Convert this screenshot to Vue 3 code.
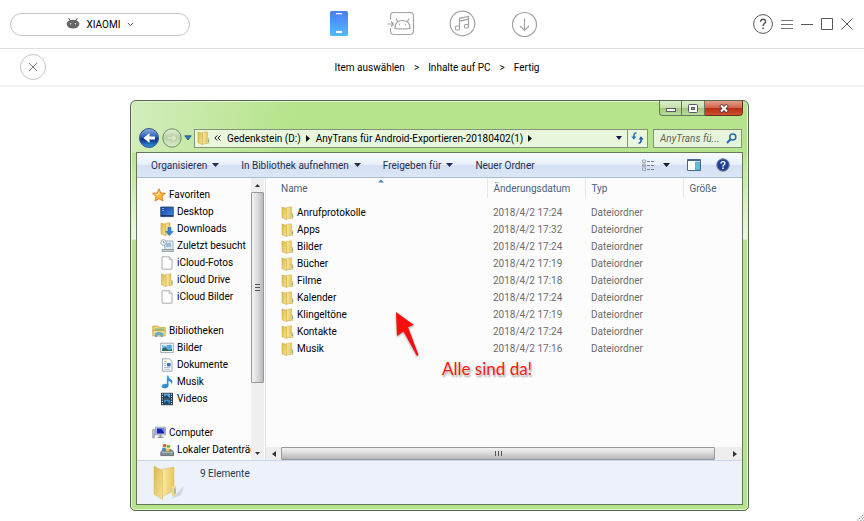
<script setup>
import { ref } from 'vue'

const navItems = [
  { id: 'device', label: 'Gerät', active: true },
  { id: 'import', label: 'Auf Android übertragen' },
  { id: 'media', label: 'Medien' },
  { id: 'download', label: 'Herunterladen' }
]
const steps = ['Item auswählen', 'Inhalte auf PC', 'Fertig']
const path = ['Gedenkstein (D:)', 'AnyTrans für Android-Exportieren-20180402(1)']
const commands = [
  { label: 'Organisieren', menu: true },
  { label: 'In Bibliothek aufnehmen', menu: true },
  { label: 'Freigeben für', menu: true },
  { label: 'Neuer Ordner', menu: false }
]
const groups = [
  {
    name: 'Favoriten',
    icon: 'star',
    items: [
      { name: 'Desktop', icon: 'desktop' },
      { name: 'Downloads', icon: 'downloads' },
      { name: 'Zuletzt besucht', icon: 'recent' },
      { name: 'iCloud-Fotos', icon: 'page' },
      { name: 'iCloud Drive', icon: 'folder' },
      { name: 'iCloud Bilder', icon: 'page' }
    ]
  },
  {
    name: 'Bibliotheken',
    icon: 'library',
    items: [
      { name: 'Bilder', icon: 'picture' },
      { name: 'Dokumente', icon: 'document' },
      { name: 'Musik', icon: 'note' },
      { name: 'Videos', icon: 'film' }
    ]
  },
  {
    name: 'Computer',
    icon: 'computer',
    items: [{ name: 'Lokaler Datenträg', icon: 'drive' }]
  }
]
const files = [
  ['Anrufprotokolle', '17:24'],
  ['Apps', '17:32'],
  ['Bilder', '17:24'],
  ['Bücher', '17:19'],
  ['Filme', '17:18'],
  ['Kalender', '17:24'],
  ['Klingeltöne', '17:19'],
  ['Kontakte', '17:24'],
  ['Musik', '17:16']
].map(([name, time]) => ({ name, date: `2018/4/2 ${time}`, type: 'Dateiordner' }))
const query = ref('')
</script>

<template>
  <div class="page">
    <svg class="sprite" width="0" height="0" aria-hidden="true">
      <defs>
        <linearGradient id="g-phone" x1="0" y1="0" x2="0" y2="1">
          <stop offset="0" stop-color="#4a7df5" /><stop offset="1" stop-color="#52b9fa" />
        </linearGradient>
        <linearGradient id="g-fold" x1="0" y1="0" x2="1" y2="0">
          <stop offset="0" stop-color="#fbeeae" /><stop offset="1" stop-color="#e8c65c" />
        </linearGradient>
        <linearGradient id="g-fold2" x1="0" y1="0" x2="1" y2="1">
          <stop offset="0" stop-color="#dcb94c" /><stop offset="1" stop-color="#f8e392" />
        </linearGradient>
        <linearGradient id="g-back" x1="0" y1="0" x2="0" y2="1">
          <stop offset="0" stop-color="#8fb0e0" /><stop offset=".45" stop-color="#2c5bb4" />
          <stop offset=".55" stop-color="#0a2f86" /><stop offset="1" stop-color="#2f9be8" />
        </linearGradient>
        <linearGradient id="g-fwd" x1="0" y1="0" x2="0" y2="1">
          <stop offset="0" stop-color="#e4eedb" /><stop offset=".5" stop-color="#b9d3a6" />
          <stop offset="1" stop-color="#dcefcd" />
        </linearGradient>
        <linearGradient id="g-screen" x1="0" y1="0" x2="1" y2="1">
          <stop offset="0" stop-color="#123f9c" /><stop offset="1" stop-color="#3f8ee8" />
        </linearGradient>
        <linearGradient id="g-note" x1="0" y1="0" x2="1" y2="1">
          <stop offset="0" stop-color="#5cc0f5" /><stop offset="1" stop-color="#1668b8" />
        </linearGradient>
      </defs>
      <symbol id="i-folder" viewBox="0 0 13 14">
        <path d="M5 1.500 10.500.8v11.400l-5.500 1z" fill="url(#g-fold)" stroke="#d3b04f" stroke-width=".5" />
        <path d="M1 1 5.600 2.600v11L1 11.800z" fill="url(#g-fold2)" stroke="#c6a03c" stroke-width=".5" />
        <path d="M9 7.500h3v5H9z" fill="#ecd88a" stroke="#cbb05c" stroke-width=".4" /><path d="M11.300 8.500v2.600" stroke="#4fa7a0" stroke-width=".9" />
      </symbol>
      <symbol id="i-star" viewBox="0 0 14 14">
        <path d="m7 .8 1.800 4.100 4.600.4L10 8.400l1 4.700-4-2.500-4 2.500 1-4.700L.6 5.300l4.600-.4z" fill="#fbb53a" stroke="#dd7a1c" stroke-width=".9" />
        <path d="m7 3 1.100 2.800L5 8 2.800 6l3-.3z" fill="#ffe28a" />
      </symbol>
      <symbol id="i-desktop" viewBox="0 0 14 14">
        <path d="M.7 2h12.600v9.600H.7z" fill="url(#g-screen)" stroke="#27406e" stroke-width=".8" />
        <path d="M2 3.500h2M2 5.500h2" stroke="#9cc9ff" stroke-width=".8" /><path d="M1 10.700h12" stroke="#1a2a4a" stroke-width="1" />
      </symbol>
      <symbol id="i-downloads" viewBox="0 0 14 14">
        <path d="M5 1.500 10 .8v11.400l-5 1z" fill="url(#g-fold)" stroke="#c9a445" stroke-width=".6" />
        <path d="M1 1 5.600 2.600v11L1 11.800z" fill="url(#g-fold2)" stroke="#c6a03c" stroke-width=".6" />
        <path d="M8 5.500h3v4h2.200l-3.700 4-3.700-4H8z" fill="#2f88d8" stroke="#165a9e" stroke-width=".5" />
      </symbol>
      <symbol id="i-recent" viewBox="0 0 14 14">
        <path d="M4 2h9v8.500H5z" fill="#dfe8ee" stroke="#8797a3" stroke-width=".7" />
        <path d="M6 5h5M6 7h5" stroke="#4f93c9" stroke-width="1" /><path d="M2 10.500h11.500v2H2z" fill="#bcc8d0" stroke="#7e8b94" stroke-width=".6" />
        <circle cx="3.500" cy="3.500" r="2.800" fill="#f3f6f8" stroke="#8a98a3" stroke-width=".8" /><path d="M3.500 2v1.700h1.400" fill="none" stroke="#55636e" stroke-width=".6" />
      </symbol>
      <symbol id="i-page" viewBox="0 0 14 14">
        <path d="M2 .8h7.500L12 3.400v9.800H2z" fill="#fdfdfd" stroke="#999" stroke-width=".8" /><path d="M9.300.9v2.700h2.600" fill="#e3e3e3" stroke="#999" stroke-width=".6" />
      </symbol>
      <symbol id="i-library" viewBox="0 0 14 14">
        <path d="M.8 2h5l1 1.400h6.400v4H.8z" fill="#f1d272" stroke="#c39e3a" stroke-width=".7" />
        <path d="M3 4.500h9v3H3z" fill="#7fc489" /><path d="M.8 6.400h12.400V12H.8z" fill="#f4db86" stroke="#c39e3a" stroke-width=".7" />
        <path d="M3.200 12.600V9.500q3.800-2.600 7.600 0v3.100H9V10.700H5v1.900z" fill="#64b4e4" stroke="#3b8fc4" stroke-width=".5" />
      </symbol>
      <symbol id="i-picture" viewBox="0 0 14 14">
        <path d="M.7 2.200h12.600v9.400H.7z" fill="#fff" stroke="#8a949c" stroke-width=".8" /><path d="M2.200 3.800h9.600v6.300H2.200z" fill="#56a8e2" />
        <path d="M2.200 8q3-3 5 0t4.600-.4v2.500H2.200z" fill="#2a6b58" /><path d="M3 5q2-1 4 0" stroke="#e3f4ff" stroke-width="1" fill="none" />
      </symbol>
      <symbol id="i-document" viewBox="0 0 14 14">
        <path d="M2.500.8h6.800L12 3.400v9.800H2.500z" fill="#fafcff" stroke="#8d98a5" stroke-width=".8" />
        <path d="M4 3.500h3M4 5.500h2M4 7.500h2M4 9.500h6M4 11.300h6" stroke="#8fa7c4" stroke-width=".7" /><path d="M7 5h3.600v3.400H7z" fill="#3272c4" />
      </symbol>
      <symbol id="i-note" viewBox="0 0 14 14">
        <path d="M6.800.6h1.500q.3 2.300 2.600 3.700 2.600 2 .6 5.200.3-2.600-3-3.400v4.700q-.3 2.400-3.700 2.600-3.400-.2-3.300-2.300.3-2.200 3.200-2.400 1.300 0 2.100.4z" fill="url(#g-note)" />
      </symbol>
      <symbol id="i-film" viewBox="0 0 14 14">
        <path d="M1 .8h12v12.400H1z" fill="#2b3238" /><path d="M3.800 1.500h6.400v5H3.800z" fill="#5aaae0" /><path d="M3.800 7.500h6.400v5H3.800z" fill="#3b86c4" />
        <path d="M3.800 4.500 7 3l3.200 3.500H3.800zM3.800 11l3-2 3.400 3.500H3.800z" fill="#1f4363" />
        <path d="M2.400 1.500v11.500M11.600 1.500v11.500" stroke="#dfe5ea" stroke-width="1.100" stroke-dasharray="1.200 1.200" />
      </symbol>
      <symbol id="i-computer" viewBox="0 0 14 14">
        <path d="M.6 3.500h2v8.500h-2z" fill="#b5bcc2" stroke="#7e878e" stroke-width=".5" /><path d="M3.500 1.200h10v7.600h-10z" fill="#dfe3e8" stroke="#808a94" stroke-width=".7" />
        <path d="M4.700 2.400h7.600v5.200H4.700z" fill="#1626b4" /><path d="M9 2.400h3.300v4z" fill="#6d86ec" /><path d="M7.500 9h2v1.800h2V12H5.500v-1.200h2z" fill="#8f989f" />
      </symbol>
      <symbol id="i-drive" viewBox="0 0 14 14">
        <path d="M.8 9 3 6.800h8.500L13.500 9v3.600H.8z" fill="#7f8b94" stroke="#46525a" stroke-width=".7" /><path d="M1.500 9.300h11.500" stroke="#cfd7dc" stroke-width=".7" />
        <path d="M10.300 10.800h2" stroke="#59d36a" stroke-width="1.200" />
        <path d="M3 1.500q1.800-1 3.400 0L5.900 4.300q-1.600-.9-3.300 0z" fill="#e8502c" /><path d="M7 1.700q1.600.9 3.300 0L9.800 4.600q-1.700.8-3.300 0z" fill="#6cb33e" />
        <path d="M2.500 4.900q1.700-.9 3.300 0l-.5 2.700q-1.600-.9-3.300 0z" fill="#3a87d6" /><path d="M6.400 5.200q1.600.9 3.300 0l-.5 2.700q-1.700.9-3.300 0z" fill="#f6c02c" />
      </symbol>
    </svg>

    <header class="topbar">
      <button class="device" type="button">
        <svg width="14" height="14" viewBox="0 0 14 14" aria-hidden="true">
          <path d="m2.500 1 1.600 2.400M11.500 1 9.900 3.400" stroke="#666" stroke-width="1" />
          <path d="M3.500 3.200q3.500-1 7 0 2.500 1 3 3.600-.5 3-2.500 4-4 1.200-8 0-2-1-2.500-4 .5-2.600 3-3.600z" fill="#666" />
          <circle cx="4.600" cy="6.800" r=".7" fill="#eee" /><circle cx="9.400" cy="6.800" r=".7" fill="#eee" />
        </svg>
        <span>XIAOMI</span>
        <svg width="7" height="5" viewBox="0 0 7 5" aria-hidden="true"><path d="m.7.8 2.800 2.800L6.300.8" fill="none" stroke="#555" /></svg>
      </button>

      <nav class="modes" aria-label="Bereiche">
        <button v-for="n in navItems" :key="n.id" type="button" :aria-label="n.label" :aria-pressed="!!n.active">
          <svg v-if="n.id === 'device'" width="28" height="28" viewBox="0 0 28 28">
            <rect x="5" y="1" width="18" height="25" rx="1.500" fill="url(#g-phone)" />
            <path d="M11 3.700h6" stroke="#fff" stroke-width="1.200" /><path d="M11 22h6" stroke="#fff" stroke-width="2.200" />
          </svg>
          <svg v-else-if="n.id === 'import'" width="28" height="28" viewBox="0 0 28 28" fill="none" stroke="#a3a3a3" stroke-width="1.200">
            <path d="M3.500 9.500V6q0-3.500 3.500-3.500h16q3.500 0 3.500 3.500v15q0 3.500-3.500 3.500H7q-3.500 0-3.500-3.500v-3" />
            <path d="M.5 14h5.500M4 11.500 6.500 14 4 16.500M8 18.500q0-8 7.500-8t7.500 8q-7.500 1-15 0zM10.500 11.500 9 8.500M20.500 11.500l1.500-3" />
            <path d="M12 14.500h.9M18 14.500h.9" stroke-width="1.500" />
          </svg>
          <svg v-else-if="n.id === 'media'" width="28" height="28" viewBox="0 0 28 28" fill="none" stroke="#a3a3a3" stroke-width="1.200">
            <circle cx="13.500" cy="13.500" r="12.300" /><path d="M10.500 17.500V8.300L19.500 6.500V16M10.500 11.200l9-2" />
            <rect x="6.500" y="16" width="4" height="4" rx="1" /><rect x="15.500" y="14.500" width="4" height="3.500" rx="1" />
          </svg>
          <svg v-else width="28" height="28" viewBox="0 0 28 28" fill="none" stroke="#a3a3a3" stroke-width="1.200">
            <circle cx="13.500" cy="14.500" r="12" /><path d="M13.500 8.500v12M9 16l4.500 4.500L18 16" />
          </svg>
        </button>
      </nav>

      <div class="window-tools">
        <button type="button" aria-label="Hilfe">
          <svg width="20" height="20" viewBox="0 0 20 20" fill="none" stroke="#555"><circle cx="10" cy="10" r="9.400" /><path d="M7.500 7.800q.2-2.500 2.600-2.500t2.500 2.200q0 1.200-1.300 2.100T10.100 12" stroke-width="1.400" /><path d="M9.300 14.200h1.600" stroke-width="1.600" /></svg>
        </button>
        <button type="button" aria-label="Menü"><svg width="12" height="12" viewBox="0 0 12 12" stroke="#777"><path d="M0 2.500h12M0 6.500h12M0 10.500h12" /></svg></button>
        <button type="button" aria-label="Minimieren"><svg width="12" height="12" viewBox="0 0 12 12" stroke="#555"><path d="M0 6.500h12" /></svg></button>
        <button type="button" aria-label="Maximieren"><svg width="12" height="12" viewBox="0 0 12 12" fill="none" stroke="#555"><path d="M.5.500h11v11H.5z" /></svg></button>
        <button type="button" aria-label="Schließen"><svg width="12" height="12" viewBox="0 0 12 12" stroke="#555"><path d="m.5.500 11 11M11.500.500l-11 11" /></svg></button>
      </div>
    </header>

    <div class="stepbar">
      <button class="cancel" type="button" aria-label="Abbrechen">
        <svg width="10" height="10" viewBox="0 0 10 10" stroke="#777"><path d="m1 1 8 8M9 1 1 9" /></svg>
      </button>
      <ol class="steps">
        <template v-for="(s, i) in steps" :key="s">
          <li v-if="i" aria-hidden="true">&gt;</li>
          <li>{{ s }}</li>
        </template>
      </ol>
    </div>

    <main class="stage">
      <section class="explorer">
        <div class="caption">
          <button type="button" aria-label="Fenster minimieren"><svg width="12" height="9" viewBox="0 0 12 9"><rect x="1.500" y="4.500" width="9" height="3" fill="#fff" stroke="#555a66" /></svg></button>
          <button type="button" aria-label="Fenster maximieren"><svg width="12" height="9" viewBox="0 0 12 9"><rect x="1.500" y=".5" width="9" height="8" rx="1" fill="#fff" stroke="#555a66" /><rect x="4.500" y="3.500" width="3" height="2" fill="#9bb87c" stroke="#555a66" /></svg></button>
          <button type="button" class="close" aria-label="Fenster schließen"><svg width="12" height="9" viewBox="0 0 12 9"><path d="m2.500 1 7 7M9.500 1l-7 7" stroke="#5b3434" stroke-width="3.600" /><path d="m3 1.500 6 6M9 1.500l-6 6" stroke="#fff" stroke-width="2" /></svg></button>
        </div>

        <div class="location">
          <div class="travel">
            <button type="button" aria-label="Zurück">
              <svg width="22" height="20" viewBox="0 0 22 20"><circle cx="11" cy="10" r="9.500" fill="url(#g-back)" stroke="#375487" /><path d="M17 8.500h-5.500V5L5.500 10l6 5v-3.500H17z" fill="#fff" /></svg>
            </button>
            <button type="button" aria-label="Vorwärts">
              <svg width="22" height="20" viewBox="0 0 22 20"><circle cx="12" cy="10" r="9.200" fill="url(#g-fwd)" stroke="#6f8a60" /><path d="M7 8.800h5V5.500l5 4.500-5 4.500v-3.300H7z" fill="#d9e9cd" stroke="#a9c497" stroke-width=".6" /></svg>
            </button>
            <button type="button" aria-label="Verlauf" class="history">
              <svg width="8" height="6" viewBox="0 0 8 6"><path d="M.8.800h6.400L4 5z" fill="#3578b8" stroke="#1d4f7c" stroke-width=".8" /></svg>
            </button>
          </div>
          <div class="address">
            <svg width="13" height="14" aria-hidden="true"><use href="#i-folder" /></svg>
            <svg class="chevrons" width="7" height="6" viewBox="0 0 7 6"><path d="M3.300.5.800 3l2.500 2.500M6.500.5 4 3l2.500 2.500" fill="none" stroke="#111" /></svg>
            <template v-for="p in path" :key="p">
              <a href="#">{{ p }}</a>
              <svg class="crumb" width="4" height="7" viewBox="0 0 4 7"><path d="m0 0 4 3.500L0 7z" fill="#111" /></svg>
            </template>
            <button type="button" class="drop" aria-label="Vorherige Orte"><svg width="6" height="4" viewBox="0 0 6 4"><path d="M0 0h6L3 4z" fill="#1c1448" /></svg></button>
            <button type="button" class="refresh" aria-label="Aktualisieren">
              <svg width="13" height="12" viewBox="0 0 13 12"><path d="M5.500.800Q2.500 1 3 5" fill="none" stroke="#2d71c6" stroke-width="1.600" /><path d="M.3 4.500h5L2.900 7.800z" fill="#2d71c6" /><path d="M7.500 11.200q3-.2 2.500-4.200" fill="none" stroke="#2458a8" stroke-width="1.600" /><path d="M7.600 7.500h5L10 4.200z" fill="#2458a8" /></svg>
            </button>
          </div>
          <label class="search">
            <input v-model="query" type="text" placeholder="AnyTrans fü..." aria-label="Durchsuchen" />
            <svg width="11" height="11" viewBox="0 0 11 11" fill="none" stroke="#2a66b0"><circle cx="6.800" cy="4" r="3" stroke-width="1.500" /><path d="M4.500 6.300 1 10" stroke-width="2" /></svg>
          </label>
        </div>

        <div class="client">
          <div class="commands">
            <button v-for="c in commands" :key="c.label" type="button">
              {{ c.label }}
              <svg v-if="c.menu" width="7" height="4" viewBox="0 0 7 4" aria-hidden="true"><path d="M0 0h7L3.500 4z" fill="#1e2e52" /></svg>
            </button>
            <div class="views">
              <button type="button" aria-label="Ansicht ändern">
                <svg width="13" height="12" viewBox="0 0 13 12"><path d="M.5 1h3v2.500h-3zM.5 5h3v2.500h-3zM.5 9h3v2.500h-3z" fill="#e9edf4" stroke="#7f8da6" stroke-width=".7" /><path d="M1.500 6.200h1.200" stroke="#d0532f" /><path d="M5 2.500h8M5 6.500h8M5 10.500h8" stroke="#75839c" stroke-dasharray="3 1" /></svg>
              </button>
              <button type="button" aria-label="Weitere Optionen" class="more"><svg width="7" height="4" viewBox="0 0 7 4"><path d="M0 0h7L3.500 4z" fill="#111a2c" /></svg></button>
              <button type="button" aria-label="Vorschaufenster" class="pane">
                <svg width="14" height="12" viewBox="0 0 14 12"><path d="M.5.500h13v11H.5z" fill="#fff" stroke="#44698f" /><path d="M0 1.500h14" stroke="#44698f" /><path d="M8.500 3h4v8h-4z" fill="#5fc0dc" stroke="#3a8fb0" stroke-width=".6" /></svg>
              </button>
              <button type="button" aria-label="Hilfe anzeigen">
                <svg width="14" height="14" viewBox="0 0 14 14"><circle cx="7" cy="7" r="6.200" fill="#1f3f9e" stroke="#6d7a94" /><path d="M5 5.600Q5.100 3.600 7 3.600t1.900 1.700Q8.900 6.300 7.800 7T7 8.600" fill="none" stroke="#fff" stroke-width="1.400" /><path d="M6.200 10.300h1.600" stroke="#fff" stroke-width="1.400" /></svg>
              </button>
            </div>
          </div>

          <div class="panes">
            <nav class="tree" aria-label="Navigationsbereich">
              <ul>
                <li v-for="g in groups" :key="g.name">
                  <a href="#" class="root"><svg width="14" height="14" aria-hidden="true"><use :href="`#i-${g.icon}`" /></svg>{{ g.name }}</a>
                  <a v-for="it in g.items" :key="it.name" href="#" class="leaf"><svg width="14" height="14" aria-hidden="true"><use :href="`#i-${it.icon}`" /></svg>{{ it.name }}</a>
                </li>
              </ul>
            </nav>
            <div class="vscroll" aria-hidden="true">
              <span class="arrow"><svg width="5" height="3" viewBox="0 0 5 3"><path d="M0 3h5L2.500 0z" fill="#333" /></svg></span>
              <span class="thumb"><svg width="5" height="7" viewBox="0 0 5 7"><path d="M0 .5h5M0 3.500h5M0 6.500h5" stroke="#555" /></svg></span>
              <span class="arrow end"><svg width="5" height="3" viewBox="0 0 5 3"><path d="M0 0h5L2.500 3z" fill="#333" /></svg></span>
            </div>
            <div class="content">
              <svg class="sorted" width="6" height="4" viewBox="0 0 6 4" aria-hidden="true"><path d="M0 3.500 3 .5l3 3z" fill="#4f86ae" /></svg>
              <table>
                <thead>
                  <tr><th>Name</th><th class="date">Änderungsdatum</th><th class="type">Typ</th><th class="size">Größe</th></tr>
                </thead>
                <tbody>
                  <tr v-for="f in files" :key="f.name">
                    <td><span class="file"><svg width="13" height="14" aria-hidden="true"><use href="#i-folder" /></svg>{{ f.name }}</span></td>
                    <td>{{ f.date }}</td>
                    <td>{{ f.type }}</td>
                    <td></td>
                  </tr>
                </tbody>
              </table>
              <div class="note">
                <svg width="28" height="48" viewBox="0 0 28 48" aria-hidden="true"><path d="m2 1 18 13-6 2 10.500 28-1.500 1L9.500 20.500 3 25z" fill="#fb0d0d" /></svg>
                <span>Alle sind da!</span>
              </div>
              <div class="hscroll" aria-hidden="true">
                <span class="side"><svg width="4" height="6" viewBox="0 0 4 6"><path d="M4 0v6L0 3z" fill="#333" /></svg></span>
                <span class="bar"><svg width="7" height="5" viewBox="0 0 7 5"><path d="M.5 0v5M3.500 0v5M6.500 0v5" stroke="#555" /></svg></span>
                <span class="side"><svg width="4" height="6" viewBox="0 0 4 6"><path d="M0 0v6l4-3z" fill="#333" /></svg></span>
              </div>
            </div>
          </div>

          <footer class="status">
            <svg width="32" height="36" viewBox="0 0 32 36" aria-hidden="true">
              <path d="m22 30 9-9-3 9-10 4z" fill="#a9afbc" opacity=".4" />
              <path d="M8 4.500 21 2v24L8 32z" fill="url(#g-fold)" stroke="#d9bc62" stroke-width=".5" />
              <path d="m1 1 8.500 5v28.500L1 29z" fill="url(#g-fold2)" stroke="#d3b355" stroke-width=".5" />
              <path d="M19 21h4v9l-4 1.500z" fill="#eed98c" /><path d="M22 23.500v5" stroke="#65b6b0" stroke-width="1.200" />
            </svg>
            <span>9 Elemente</span>
          </footer>
        </div>
      </section>
    </main>

    <svg class="grip" width="9" height="8" viewBox="0 0 9 8" aria-hidden="true">
      <path d="m1 9 8.500-8.500M4 9.500 9.500 4M7 9.500 9.500 7" stroke="#888" stroke-width="1.200" stroke-dasharray="1.200 1" />
    </svg>
  </div>
</template>

<style>
body {
  background: #fff;
}
</style>

<style scoped>
.page {
  position: relative;
  box-sizing: border-box;
  min-height: 100vh;
  padding-bottom: 10px;
  background: #fff;
  color: #000;
  font: 10px/17px Roboto, "Open Sans", sans-serif;
}
.page *,
.page *::before {
  box-sizing: border-box;
}
.sprite {
  position: absolute;
}
svg {
  display: block;
  flex: none;
}
button {
  display: flex;
  align-items: center;
  justify-content: center;
  margin: 0;
  padding: 0;
  border: 0;
  background: none;
  color: inherit;
  font: inherit;
  white-space: nowrap;
}
a {
  color: inherit;
  text-decoration: none;
  white-space: nowrap;
}
ul,
ol {
  margin: 0;
  padding: 0;
  list-style: none;
}

.topbar {
  display: grid;
  grid-template-columns: 1fr auto 1fr;
  align-items: center;
  height: 49px;
  padding: 0 11px 0 10px;
  border-bottom: 1px solid #dedede;
}
.device {
  gap: 7px;
  width: 180px;
  height: 23px;
  border: 1px solid #c4c4c4;
  border-radius: 12px;
}
.modes {
  display: flex;
  gap: 34px;
}
.window-tools {
  display: flex;
  justify-content: flex-end;
  align-items: center;
  gap: 8px;
}
.stepbar {
  display: grid;
  grid-template-columns: 1fr auto 1fr;
  align-items: center;
  height: 38px;
  padding: 0 10px 0 20px;
  border-bottom: 2px solid #f1f1f1;
}
.cancel {
  width: 26px;
  height: 26px;
  border: 1px solid #c4c4c4;
  border-radius: 50%;
}
.steps {
  display: flex;
  gap: 9px;
}

.stage {
  padding: 13px 115px 0 130px;
}
.explorer {
  padding: 0 5px 5px;
  border: 1px solid #59664f;
  border-radius: 6px 6px 5px 5px;
  background:
    linear-gradient(100deg, #d3edbc 0, rgba(182, 228, 140, 0) 160px) 0 0 / 100% 52px no-repeat,
    linear-gradient(#b6e48c 0, #b6e48c 50px, #eef8e6 138px, #b6e48c 139px);
  box-shadow: inset 0 0 0 1px #e2f5d2;
}
.caption {
  display: flex;
  justify-content: flex-end;
  height: 15px;
}
.caption button {
  width: 23px;
  border: 1px solid #66785a;
  border-top: 0;
  border-left: 0;
  background: linear-gradient(#dcefcb, #c3dfa9 50%, #a2c582 50%, #b9dd99);
}
.caption button:first-child {
  border-left: 1px solid #66785a;
  border-radius: 0 0 0 4px;
}
.caption .close {
  width: 38px;
  border-color: #6b2f20;
  border-radius: 0 0 4px 0;
  background: linear-gradient(#e2a08c, #cf6249 50%, #b52c12 50%, #cf5130);
}
.location {
  display: flex;
  align-items: center;
  height: 20px;
  margin: 12px 1px 4px 2px;
}
.travel {
  display: flex;
  align-items: center;
  width: 56px;
}
.history {
  margin-left: 2px;
}
.address {
  display: flex;
  flex: 1;
  align-items: center;
  min-width: 0;
  height: 19px;
  padding-left: 2px;
  border: 1px solid #84927a;
  background: #e9f7dd;
}
.chevrons {
  margin: 0 6px 0 4px;
}
.crumb {
  margin: 0 6px 0 5px;
}
.drop {
  width: 17px;
  height: 17px;
  margin-left: auto;
}
.refresh {
  width: 20px;
  height: 17px;
  border-left: 1px solid #84927a;
}
.search {
  display: flex;
  align-items: center;
  width: 89px;
  height: 19px;
  margin-left: 5px;
  padding: 0 4px 0 6px;
  border: 1px solid #84927a;
  background: #e6f5d9;
}
.search input {
  flex: 1;
  min-width: 0;
  padding: 0;
  border: 0;
  background: none;
  color: #333;
  font: inherit;
  font-style: italic;
}
.search input::placeholder {
  color: #5d6658;
  opacity: 1;
}

.client {
  border: 1px solid #66785a;
  background: #fcfcfc;
}
.commands {
  display: flex;
  align-items: center;
  gap: 22px;
  height: 25px;
  padding: 0 12px 0 14px;
  border-bottom: 1px solid #a9bad2;
  background: linear-gradient(#f7faff, #e8effa 50%, #d4e0f2 50%, #dbe6f5);
  color: #1e2e52;
}
.commands > button {
  gap: 5px;
}
.views {
  display: flex;
  align-items: center;
  margin-left: auto;
}
.more {
  margin: 0 17px 0 8px;
}
.pane {
  margin-right: 15px;
}
.panes {
  display: flex;
  height: 282px;
}
.tree {
  width: 114px;
  overflow: hidden;
  padding: 8px 0 0 15px;
}
.tree li {
  margin-bottom: 17px;
}
.root,
.leaf {
  display: flex;
  align-items: center;
  gap: 3px;
  height: 17px;
}
.leaf {
  margin-left: 8px;
}
.vscroll {
  display: flex;
  flex-direction: column;
  width: 13px;
  background: #efefef;
}
.arrow {
  display: grid;
  place-items: center;
  height: 14px;
}
.arrow.end {
  margin-top: auto;
}
.thumb {
  display: grid;
  place-items: center;
  height: 191px;
  border: 1px solid #999;
  border-radius: 1px;
  background: linear-gradient(90deg, #f3f3f3, #dcdcdc 50%, #b9b9bd);
}
.content {
  position: relative;
  display: flex;
  flex: 1;
  flex-direction: column;
  min-width: 0;
  margin-left: 1px;
  border-left: 1px solid #d5e3f0;
}
.sorted {
  position: absolute;
  top: 1px;
  left: 112px;
}
table {
  width: 100%;
  border-collapse: collapse;
  table-layout: fixed;
}
th,
td {
  height: 17px;
  padding: 0 0 0 6px;
  font-weight: 400;
  text-align: left;
  white-space: nowrap;
}
th {
  height: 20px;
  border-left: 1px solid #e2e8f0;
  color: #4c607a;
}
th:first-child {
  border-left: 0;
}
th:first-child,
td:first-child {
  padding-left: 15px;
}
tbody::before {
  content: "";
  display: block;
  height: 6px;
}
td {
  color: #6d6d6d;
}
td:first-child {
  color: #000;
}
.date,
.type {
  width: 98px;
}
.size {
  width: 59px;
}
.file {
  display: flex;
  align-items: center;
  gap: 3px;
}
.note {
  position: absolute;
  top: 133px;
  left: 128px;
  color: #f3160f;
  font: 17px/20px "Century Gothic", "URW Gothic", Lato, sans-serif;
  white-space: nowrap;
  text-shadow: 0 0 2px #fff, 1px 2px 2px #999;
}
.note svg {
  filter: drop-shadow(0 1px 1px #999);
}
.note span {
  display: block;
  margin-left: 48px;
}
.hscroll {
  display: flex;
  height: 13px;
  margin-top: auto;
  background: #eee;
}
.side {
  display: grid;
  place-items: center;
  width: 15px;
}
.bar {
  display: grid;
  flex: 1;
  place-items: center;
  margin-right: 12px;
  border: 1px solid #999;
  border-radius: 1px;
  background: linear-gradient(#f3f3f3, #d8d8d8 50%, #b5b5b8);
}
.status {
  display: flex;
  height: 44px;
  padding: 4px 0 0 16px;
  gap: 15px;
  border-top: 1px solid #c8d6e6;
  background: #edf1fa;
  color: #1e395b;
}
.grip {
  position: absolute;
  right: 0;
  bottom: 0;
}
</style>
